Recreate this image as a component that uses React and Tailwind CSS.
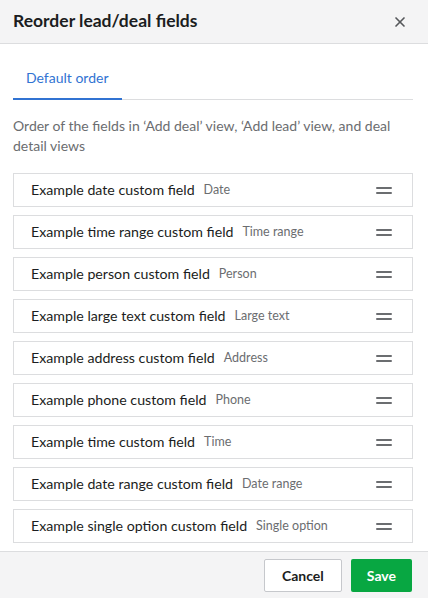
import { X } from 'lucide-react';

const FIELDS = [
  { name: 'Example date custom field', type: 'Date' },
  { name: 'Example time range custom field', type: 'Time range' },
  { name: 'Example person custom field', type: 'Person' },
  { name: 'Example large text custom field', type: 'Large text' },
  { name: 'Example address custom field', type: 'Address' },
  { name: 'Example phone custom field', type: 'Phone' },
  { name: 'Example time custom field', type: 'Time' },
  { name: 'Example date range custom field', type: 'Date range' },
  { name: 'Example single option custom field', type: 'Single option' },
];

function DragHandle() {
  return (
    <div className="flex flex-col gap-[3px] w-[16px] shrink-0">
      <span className="h-[2px] bg-[#6b6d70] rounded-full" />
      <span className="h-[2px] bg-[#6b6d70] rounded-full" />
    </div>
  );
}

function FieldRow({ name, type }) {
  return (
    <div className="flex items-center h-[34px] shrink-0 border border-[#dcdddf] bg-white pl-[17px] pr-[20px]">
      <span className="text-[14.2px] text-[#1b1d21]">{name}</span>
      <span className="ml-[9px] text-[12.5px] text-[#6b6d70]">{type}</span>
      <div className="ml-auto">
        <DragHandle />
      </div>
    </div>
  );
}

export default function App() {
  return (
    <div className="w-[428px] h-[598px] flex flex-col bg-white font-['Lato',sans-serif] overflow-hidden">
      {/* Modal header */}
      <div className="h-[44px] shrink-0 flex items-center justify-between pl-[13px] pr-[20px] bg-[#f4f4f5] border-b border-[#dcdddf]">
        <h1 className="text-[17.5px] font-bold text-[#1b1d21]">Reorder lead/deal fields</h1>
        <X size={16} strokeWidth={2.5} className="text-[#55575b]" />
      </div>

      <div className="flex-1 overflow-hidden pl-[13px] pr-[15px]">
        <div className="flex border-b border-[#dcdddf] mt-[23px]">
          <button className="px-[13px] pb-[10px] text-[14px] text-[#3173d2] border-b-2 border-[#3173d2] -mb-px">
            Default order
          </button>
        </div>

        <p className="mt-[16px] text-[14px] leading-[20px] text-[#6b6d70]">
          Order of the fields in ‘Add deal’ view, ‘Add lead’ view, and deal detail views
        </p>

        <div className="mt-[17px] flex flex-col gap-[8px]">
          {FIELDS.map((f) => (
            <FieldRow key={f.name} name={f.name} type={f.type} />
          ))}
          {/* next row peeking under the footer */}
          <div className="h-[34px] shrink-0 border border-[#dcdddf] bg-white" />
        </div>
      </div>

      {/* Footer actions */}
      <div className="h-[47px] shrink-0 flex items-center justify-end gap-[9px] pr-[16px] bg-[#f4f4f5] border-t border-[#dcdddf]">
        <button className="h-[33px] px-[17px] bg-white border border-[#c6c8cc] rounded-[2px] text-[14px] font-bold text-[#1b1d21]">
          Cancel
        </button>
        <button className="h-[33px] px-[16px] bg-[#08a742] rounded-[2px] text-[14px] font-bold text-white">
          Save
        </button>
      </div>
    </div>
  );
}
